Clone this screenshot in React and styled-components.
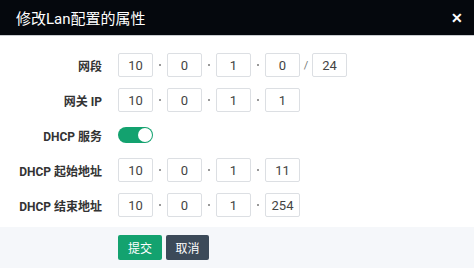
import React from 'react'
import styled, { createGlobalStyle } from 'styled-components';

const Global = createGlobalStyle`
    html, body {
        margin: 0;
        background: #fff;
        font-family: Roboto, "Noto Sans CJK SC", sans-serif;
    }
`;

const Header = styled.div`
    height: 35px;
    background: #05080d;
    border-bottom: 1px solid #c9ccd0;
    display: flex;
    align-items: center;
    justify-content: space-between;
    padding: 0 11px 0 16px;
`;

const Title = styled.h1`
    margin: 0;
    font-size: 15px;
    font-weight: 400;
    color: #fff;
`;

const Close = styled.span`
    color: #fff;
    font-size: 14px;
    font-weight: 900;
    line-height: 1;
`;

const Form = styled.div`
    padding-top: 17px;
    display: flex;
    flex-direction: column;
    gap: 11px;
`;

const Row = styled.div`
    display: flex;
    align-items: center;
    height: 24px;
`;

const Label = styled.label`
    width: 118px;
    flex-shrink: 0;
    padding-right: 16px;
    box-sizing: border-box;
    text-align: right;
    font-size: 12px;
    font-weight: 700;
    color: #333;
`;

const Field = styled.div`
    width: 35px;
    height: 24px;
    flex-shrink: 0;
    box-sizing: border-box;
    border: 1px solid #dcdfe3;
    border-radius: 2px;
    display: flex;
    align-items: center;
    justify-content: center;
    font-size: 13px;
    color: #444;
`;

const Sep = styled.span`
    width: ${({w}) => w}px;
    display: flex;
    justify-content: center;
    align-items: center;
    font-size: 11px;
    color: #777;
`;

const Dot = styled.span`
    width: 2px;
    height: 2px;
    border-radius: 50%;
    background: #777;
`;

const Switch = styled.div`
    width: 35px;
    height: 16px;
    border-radius: 8px;
    background: #13a26f;
    display: flex;
    align-items: center;
    justify-content: flex-end;
    padding: 0 1px;
    box-sizing: border-box;
`;

const Knob = styled.div`
    width: 14px;
    height: 14px;
    border-radius: 50%;
    background: #fff;
`;

const Footer = styled.div`
    margin-top: 10px;
    background: #f5f7fa;
    padding: 8px 0 8px 118px;
    display: flex;
    gap: 4px;
`;

const Button = styled.button`
    height: 25px;
    padding: 0;
    width: ${({w}) => w}px;
    border: none;
    border-radius: 2px;
    background: ${({primary}) => (primary ? '#13a26f' : '#3c4a59')};
    color: #fff;
    font-size: 12px;
    font-family: inherit;
`;

const IpField = ({ parts, mask }) => (
    <>
        {parts.map((p, i) => (
            <React.Fragment key={i}>
                {i > 0 && <Sep w={14}><Dot /></Sep>}
                <Field>{p}</Field>
            </React.Fragment>
        ))}
        {mask && (
            <>
                <Sep w={12}>/</Sep>
                <Field>{mask}</Field>
            </>
        )}
    </>
);

const App = () => {
    return (
        <div>
            <Global />
            <Header>
                <Title>修改Lan配置的属性</Title>
                <Close>✕</Close>
            </Header>
            <Form>
                <Row>
                    <Label>网段</Label>
                    <IpField parts={['10', '0', '1', '0']} mask="24" />
                </Row>
                <Row>
                    <Label>网关 IP</Label>
                    <IpField parts={['10', '0', '1', '1']} />
                </Row>
                <Row>
                    <Label>DHCP 服务</Label>
                    <Switch><Knob /></Switch>
                </Row>
                <Row>
                    <Label>DHCP 起始地址</Label>
                    <IpField parts={['10', '0', '1', '11']} />
                </Row>
                <Row>
                    <Label>DHCP 结束地址</Label>
                    <IpField parts={['10', '0', '1', '254']} />
                </Row>
            </Form>
            <Footer>
                <Button primary w={44}>提交</Button>
                <Button w={43}>取消</Button>
            </Footer>
        </div>
    )
}

export default App
